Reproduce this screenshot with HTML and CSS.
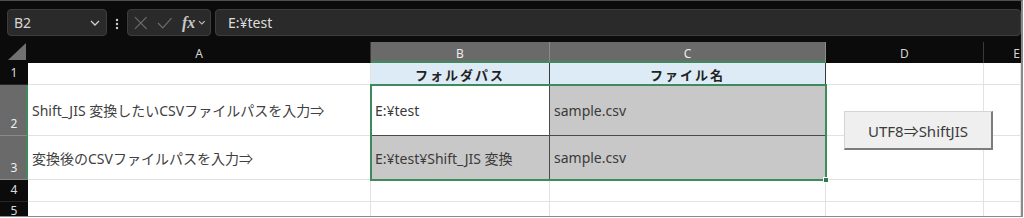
FILE: index.html
```html
<!DOCTYPE html>
<html>
<head>
    <meta charset="utf-8">
    <title>UTF8 → ShiftJIS</title>
    <link rel="stylesheet" href="styles.css">
</head>
<body>
<div class="app">
    <!-- 名前ボックス + 数式バー -->
    <div class="formula-bar">
        <div class="name-box">
            <span>B2</span>
            <svg class="chev" width="10" height="6" viewBox="0 0 10 6"><path d="M1 1l4 4 4-4" fill="none" stroke="#cfcfcf" stroke-width="1.3"/></svg>
        </div>
        <svg class="grip" width="4" height="12" viewBox="0 0 4 12">
            <circle cx="2" cy="2" r="1.2" fill="#cfcfcf"/><circle cx="2" cy="6" r="1.2" fill="#cfcfcf"/><circle cx="2" cy="10" r="1.2" fill="#cfcfcf"/>
        </svg>
        <div class="fx-box">
            <svg width="14" height="14" viewBox="0 0 14 14"><path d="M1 1l12 12M13 1L1 13" stroke="#6e6e6e" stroke-width="1.2"/></svg>
            <svg width="16" height="12" viewBox="0 0 16 12"><path d="M1 6l5 5L15 1" fill="none" stroke="#6e6e6e" stroke-width="1.2"/></svg>
            <span class="fx">fx</span>
            <svg class="chev" width="8" height="5" viewBox="0 0 8 5"><path d="M1 1l3 3 3-3" fill="none" stroke="#bdbdbd" stroke-width="1.1"/></svg>
        </div>
        <div class="formula-input">E:¥test</div>
    </div>

    <!-- シート -->
    <div class="sheet">
        <div class="corner"><span class="tri"></span></div>
        <div class="col-h">A</div>
        <div class="col-h sel">B</div>
        <div class="col-h sel">C</div>
        <div class="col-h">D</div>
        <div class="col-h last">E</div>

        <div class="row-h">1</div>
        <div class="cell"></div>
        <div class="cell head">フォルダパス</div>
        <div class="cell head">ファイル名</div>
        <div class="cell"></div>
        <div class="cell"></div>

        <div class="row-h sel">2</div>
        <div class="cell">Shift_JIS 変換したいCSVファイルパスを入力⇒</div>
        <div class="cell data">E:¥test</div>
        <div class="cell data grey">sample.csv</div>
        <div class="cell"></div>
        <div class="cell"></div>

        <div class="row-h sel">3</div>
        <div class="cell">変換後のCSVファイルパスを入力⇒</div>
        <div class="cell data grey">E:¥test¥Shift_JIS 変換</div>
        <div class="cell data grey">sample.csv</div>
        <div class="cell"></div>
        <div class="cell"></div>

        <div class="row-h">4</div>
        <div class="cell"></div>
        <div class="cell"></div>
        <div class="cell"></div>
        <div class="cell"></div>
        <div class="cell"></div>

        <div class="row-h">5</div>
        <div class="cell"></div>
        <div class="cell"></div>
        <div class="cell"></div>
        <div class="cell"></div>
        <div class="cell"></div>

        <!-- 選択範囲 B2:C3 -->
        <div class="selection"><span class="handle"></span></div>
        <!-- ボタン図形 -->
        <div class="macro-btn">UTF8⇒ShiftJIS</div>
    </div>
</div>
</body>
</html>
```

FILE: styles.css
```css
*{box-sizing:border-box;}
html,body{margin:0;padding:0;}
body{
    background:#fff;
    font-family:"Noto Sans","Noto Sans CJK JP",sans-serif;
    width:1024px;height:218px;overflow:hidden;
}

.app{
    width:1023px;height:217px;
    border-top:1px solid #4e4e4e;
    border-right:2px solid #8a8a8a;
    border-bottom:1px solid #8a8a8a;
    background:#0b0b0b;
    display:flex;flex-direction:column;
}

/* formula bar */
.formula-bar{
    height:41px;
    display:flex;align-items:flex-start;
    padding:8px 0 0 7px;
}
.name-box,.fx-box,.formula-input{
    height:27px;
    background:#2a2a2a;
    border:1px solid #3d3d3d;
    border-radius:4px;
    display:flex;align-items:center;
}
.name-box{
    width:100px;padding:0 6px 0 6px;
    justify-content:space-between;
    color:#d6d6d6;font-size:14px;
}
.name-box .chev{margin-top:1px;}
.grip{margin:9px 8px 0 8px;}
.fx-box{
    width:84px;padding:0 4px 0 6px;gap:9px;
}
.fx-box .fx{
    font-family:"Liberation Serif","DejaVu Serif",serif;
    font-style:italic;font-weight:bold;
    font-size:16px;color:#c8c8c8;
    margin-left:1px;margin-right:-6px;
}
.formula-input{
    flex:1;margin-left:4px;
    padding-left:12px;
    color:#dedede;font-size:14px;
}

/* sheet grid */
.sheet{
    flex:1;
    display:grid;
    grid-template-columns:28px 343px 179px 276px 158px 1fr;
    grid-template-rows:21px 22px 51px 44px 22px 1fr;
    background:#fff;
    overflow:hidden;
    position:relative;
}
.corner{
    background:#0b0b0b;
    position:relative;
}
.corner .tri{
    position:absolute;left:8px;top:1px;
    width:18px;height:17px;
    background:#707070;
    clip-path:polygon(100% 0,100% 100%,0 100%);
}
.col-h{
    background:#0b0b0b;
    color:#d4d4d4;font-size:12px;
    display:flex;align-items:center;justify-content:center;
    border-right:1px solid #3a3a3a;
    padding-top:1px;
}
.col-h.sel{
    background:#6a6a6a;color:#ececec;
    border-right:1px solid #8a8a8a;
    border-bottom:2px solid #3f8a5c;
    padding-top:3px;
}
.col-h.last{
    border-right:none;justify-content:flex-end;padding-right:1px;
}
.row-h{
    background:#0b0b0b;
    color:#dcdcdc;font-size:12px;
    display:flex;align-items:flex-end;justify-content:center;
    padding-bottom:3px;
    border-bottom:1px solid #262626;
}
.row-h.sel{
    background:#6a6a6a;color:#f0f0f0;
    border-bottom:1px solid #8a8a8a;
    border-right:2px solid #3f8a5c;
    padding-left:2px;
}

.cell{
    border-right:1px solid #e2e2e2;
    border-bottom:1px solid #e2e2e2;
    color:#404040;font-size:14px;
    display:flex;align-items:center;
    padding:0 4px;
    white-space:nowrap;overflow:hidden;
}
.cell.head{
    background:#ddebf7;
    color:#222;font-weight:bold;font-size:13px;
    justify-content:center;letter-spacing:2px;
    border-right:1px solid #3a3a3a;
    padding-top:2px;
}
.cell.data{
    border-right:1px solid #4a4a4a;
    border-bottom:1px solid #4a4a4a;
    color:#3a3a3a;
}
.cell.grey{background:#c8c8c8;}

/* overlays: selection frame and the floating button shape */
.selection{
    position:absolute;left:370px;top:42px;
    width:457px;height:97px;
    border:2px solid #3f8a5c;
    pointer-events:none;
}
.selection .handle{
    position:absolute;right:-4px;bottom:-4px;
    width:6px;height:6px;
    background:#2f7a4e;border:1px solid #fff;
}

.macro-btn{
    position:absolute;left:844px;top:69px;
    width:149px;height:39px;
    background:#efefef;
    border-top:1px solid #d4d4d4;
    border-left:1px solid #d4d4d4;
    border-right:2px solid #7c7c7c;
    border-bottom:2px solid #7c7c7c;
    color:#3c3c3c;font-size:15px;
    display:flex;align-items:center;justify-content:center;
}
```
